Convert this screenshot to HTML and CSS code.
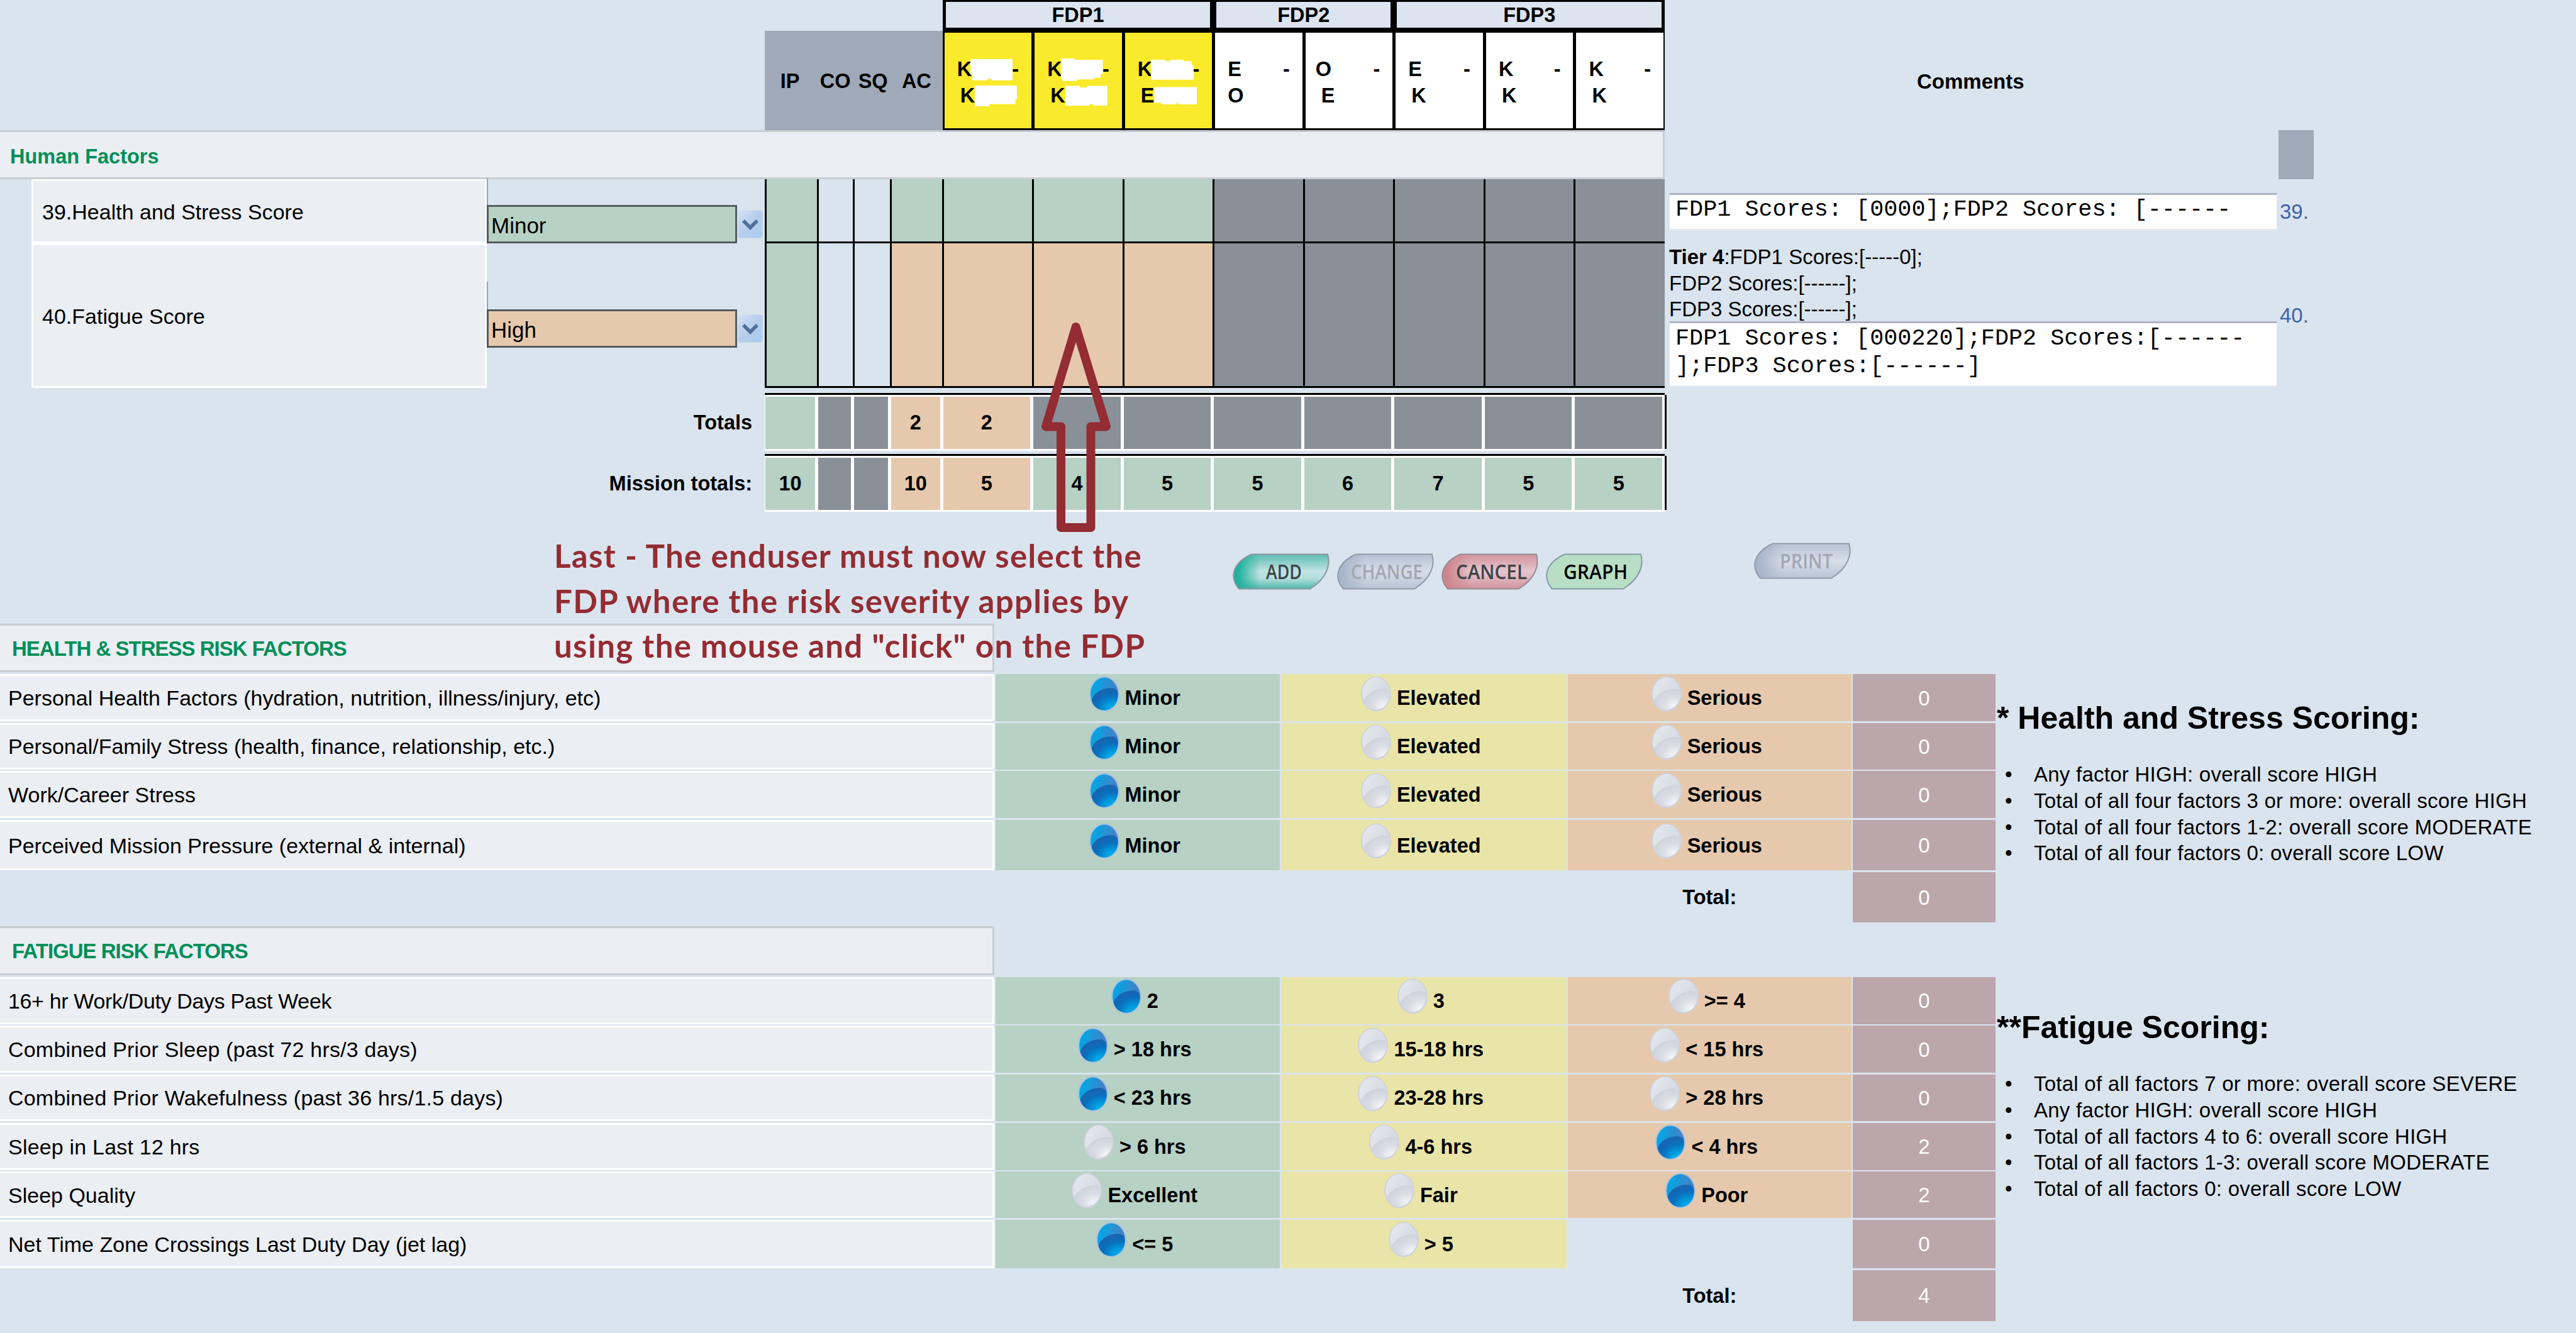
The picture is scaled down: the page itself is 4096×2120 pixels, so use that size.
FILE: index.html
```
<!DOCTYPE html>
<html lang="en">
<head>
<meta charset="utf-8">
<title>Risk Assessment - Human Factors</title>
<link rel="stylesheet" href="styles.css">
</head>
<body>

<!-- shared radio artwork -->
<svg class="defs" width="0" height="0">
    <defs>
        <linearGradient id="blueTop" x1="0" y1="0.2" x2="1" y2="0.4">
            <stop offset="0.2" stop-color="#0aa2e2"/>
            <stop offset="1" stop-color="#4f7cc0"/>
        </linearGradient>
        <radialGradient id="blueBall" cx="0.8" cy="0.95" r="0.95">
            <stop offset="0" stop-color="#00b4f0"/>
            <stop offset="0.3" stop-color="#009ade"/>
            <stop offset="0.65" stop-color="#0a70bc"/>
            <stop offset="1" stop-color="#1a62b0"/>
        </radialGradient>
        <linearGradient id="greyTop" x1="0" y1="0" x2="1" y2="0.6">
            <stop offset="0" stop-color="#e6e9ef"/>
            <stop offset="1" stop-color="#d3d7df"/>
        </linearGradient>
        <radialGradient id="greyBall" cx="0.8" cy="0.85" r="0.9">
            <stop offset="0" stop-color="#f6f7fa"/>
            <stop offset="0.5" stop-color="#dadde4"/>
            <stop offset="1" stop-color="#cdd1da"/>
        </radialGradient>
        <linearGradient id="arrowBtn" x1="0" y1="0" x2="1" y2="1">
            <stop offset="0" stop-color="#d3e1f5"/>
            <stop offset="0.5" stop-color="#b6cdec"/>
            <stop offset="1" stop-color="#a9cdf0"/>
        </linearGradient>
        <symbol id="on" viewBox="0 0 47 56">
            <ellipse cx="23.5" cy="28" rx="23.5" ry="27.5" fill="#a5c3e2"/>
            <ellipse cx="23.5" cy="28" rx="21.5" ry="25.5" fill="url(#blueTop)"/>
            <path d="M3.500 37 C8 26 20 19 34 19 C39 19 42 21 44 24 C47 40 38 53 24 53.500 C12 53.500 5 46 3.500 37Z" fill="url(#blueBall)"/>
        </symbol>
        <symbol id="off" viewBox="0 0 47 56">
            <ellipse cx="23.5" cy="28" rx="23.500" ry="27.500" fill="#ced2dc"/>
            <ellipse cx="23.5" cy="27.500" rx="21.500" ry="25.500" fill="url(#greyTop)"/>
            <path d="M4 38 C9 30 18 22 32 20 C38 19 42 20 44 23 C47 38 38 52 24 52.500 C12 52.500 5 46 4 38Z" fill="url(#greyBall)"/>
        </symbol>
        <symbol id="drop" viewBox="0 0 40 45">
            <rect x="0.500" y="0.500" width="39" height="44" rx="4" fill="url(#arrowBtn)"/>
            <path d="M9 17 L20 28 L31 17" fill="none" stroke="#4d6f98" stroke-width="5.500"/>
        </symbol>
    </defs>
</svg>

<div class="upper">
    <div class="board">
        <div class="head">
            <div class="roles"><span>IP</span><span>CO</span><span>SQ</span><span>AC</span></div>
            <div class="duty">
                <div class="fdp f3">FDP1</div>
                <div class="fdp f2">FDP2</div>
                <div class="fdp f3">FDP3</div>
                <div class="leg yellow">
                    <p>K<i class="mask m1"></i><b>-</b></p>
                    <p class="to">K<i class="mask m2"></i></p>
                </div>
                <div class="leg yellow">
                    <p>K<i class="mask m3"></i><b>-</b></p>
                    <p class="to">K<i class="mask m4"></i></p>
                </div>
                <div class="leg yellow">
                    <p>K<i class="mask m5"></i><b>-</b></p>
                    <p class="to">E<i class="mask m6"></i></p>
                </div>
                <div class="leg"><p>E<b>-</b></p><p>O</p></div>
                <div class="leg"><p class="wide">O<b>-</b></p><p class="to">E</p></div>
                <div class="leg"><p>E<b>-</b></p><p class="to">K</p></div>
                <div class="leg"><p>K<b>-</b></p><p class="to">K</p></div>
                <div class="leg"><p>K<b>-</b></p><p class="to">K</p></div>
            </div>
        </div>

        <div class="band">Human Factors</div>

        <div class="score r39">
            <div class="name">39.Health and Stress Score</div>
            <div class="pick">
                <div class="select green">Minor</div>
                <svg class="drop"><use href="#drop"/></svg>
            </div>
            <div class="cell green first"></div><div class="cell"></div><div class="cell"></div><div class="cell green"></div>
            <div class="cell green"></div><div class="cell green"></div><div class="cell green"></div>
            <div class="cell grey"></div><div class="cell grey"></div><div class="cell grey"></div><div class="cell grey"></div><div class="cell grey"></div>
        </div>
        <div class="score r40">
            <div class="name">40.Fatigue Score</div>
            <div class="pick">
                <div class="select orange">High</div>
                <svg class="drop"><use href="#drop"/></svg>
            </div>
            <div class="cell green first"></div><div class="cell"></div><div class="cell"></div><div class="cell orange"></div>
            <div class="cell orange"></div><div class="cell orange"></div><div class="cell orange"></div>
            <div class="cell grey"></div><div class="cell grey"></div><div class="cell grey"></div><div class="cell grey"></div><div class="cell grey"></div>
        </div>

        <div class="totals">
            <div class="caption">Totals</div>
            <div class="sum">
                <div class="green"></div><div class="grey"></div><div class="grey"></div><div class="orange">2</div>
                <div class="orange">2</div><div class="grey"></div><div class="grey"></div>
                <div class="grey"></div><div class="grey"></div><div class="grey"></div><div class="grey"></div><div class="grey"></div>
            </div>
        </div>
        <div class="totals">
            <div class="caption">Mission totals:</div>
            <div class="sum">
                <div class="green">10</div><div class="grey"></div><div class="grey"></div><div class="orange">10</div>
                <div class="orange">5</div><div class="green">4</div><div class="green">5</div>
                <div class="green">5</div><div class="green">6</div><div class="green">7</div><div class="green">5</div><div class="green">5</div>
            </div>
        </div>

        <div class="buttons">
            <svg class="btn" viewBox="0 0 156 58">
                <defs>
                    <linearGradient id="addV" x1="0" y1="0" x2="0" y2="1">
                        <stop offset="0" stop-color="#5cbcb0"/><stop offset="0.5" stop-color="#c2e3e3"/><stop offset="0.7" stop-color="#b4dedc"/><stop offset="1" stop-color="#4fb7ab"/>
                    </linearGradient>
                    <linearGradient id="addH" x1="0" y1="0" x2="1" y2="0">
                        <stop offset="0.05" stop-color="#1fb09e"/><stop offset="0.28" stop-color="#1fb09e" stop-opacity="0"/>
                    </linearGradient>
                </defs>
                <path d="M31 1.500 H152 C157 18 151 40 124 56.500 H11 C-5 38 1 15 31 1.500Z" fill="url(#addV)"/>
                <path d="M31 1.500 H152 C157 18 151 40 124 56.500 H11 C-5 38 1 15 31 1.500Z" fill="url(#addH)" stroke="#8d979f" stroke-width="2"/>
                <text x="54" y="41" textLength="57" lengthAdjust="spacingAndGlyphs" fill="#3c4446">ADD</text>
            </svg>
            <svg class="btn" viewBox="0 0 156 58">
                <defs>
                    <linearGradient id="offV" x1="0" y1="0" x2="0" y2="1">
                        <stop offset="0" stop-color="#b6c1d3"/><stop offset="0.5" stop-color="#d7dde8"/><stop offset="1" stop-color="#bac4d4"/>
                    </linearGradient>
                    <linearGradient id="offH" x1="0" y1="0" x2="1" y2="0">
                        <stop offset="0.05" stop-color="#a8b5ca"/><stop offset="0.3" stop-color="#a8b5ca" stop-opacity="0"/>
                    </linearGradient>
                </defs>
                <path d="M31 1.500 H152 C157 18 151 40 124 56.500 H11 C-5 38 1 15 31 1.500Z" fill="url(#offV)"/>
                <path d="M31 1.500 H152 C157 18 151 40 124 56.500 H11 C-5 38 1 15 31 1.500Z" fill="url(#offH)" stroke="#919ba8" stroke-width="2"/>
                <text x="23" y="41" textLength="114" lengthAdjust="spacingAndGlyphs" fill="#a0a7b2">CHANGE</text>
            </svg>
            <svg class="btn" viewBox="0 0 156 58">
                <defs>
                    <linearGradient id="canV" x1="0" y1="0" x2="0" y2="1">
                        <stop offset="0" stop-color="#d4939b"/><stop offset="0.5" stop-color="#e5c6d0"/><stop offset="1" stop-color="#d2939c"/>
                    </linearGradient>
                    <linearGradient id="canH" x1="0" y1="0" x2="1" y2="0">
                        <stop offset="0.05" stop-color="#cd858b"/><stop offset="0.3" stop-color="#cd858b" stop-opacity="0"/>
                    </linearGradient>
                </defs>
                <path d="M31 1.500 H152 C157 18 151 40 124 56.500 H11 C-5 38 1 15 31 1.500Z" fill="url(#canV)"/>
                <path d="M31 1.500 H152 C157 18 151 40 124 56.500 H11 C-5 38 1 15 31 1.500Z" fill="url(#canH)" stroke="#938e97" stroke-width="2"/>
                <text x="24" y="41" textLength="113" lengthAdjust="spacingAndGlyphs" fill="#3c4446">CANCEL</text>
            </svg>
            <svg class="btn" viewBox="0 0 156 58">
                <path d="M31 1.500 H152 C157 18 151 40 124 56.500 H11 C-5 38 1 15 31 1.500Z" fill="#b8dfc5" stroke="#8799a8" stroke-width="2"/>
                <text x="29" y="41" textLength="102" lengthAdjust="spacingAndGlyphs" fill="#000">GRAPH</text>
            </svg>
            <svg class="btn print" viewBox="0 0 156 58">
                <path d="M31 1.500 H152 C157 18 151 40 124 56.500 H11 C-5 38 1 15 31 1.500Z" fill="url(#offV)"/>
                <path d="M31 1.500 H152 C157 18 151 40 124 56.500 H11 C-5 38 1 15 31 1.500Z" fill="url(#offH)" stroke="#919ba8" stroke-width="2"/>
                <text x="42" y="41" textLength="84" lengthAdjust="spacingAndGlyphs" fill="#a0a7b2">PRINT</text>
            </svg>
        </div>
    </div>

    <div class="comments">
        <div class="title">Comments</div>
        <div class="box one">FDP1 Scores: [0000];FDP2 Scores: [------</div>
        <div class="tier"><b>Tier 4</b>:FDP1 Scores:[-----0];<br>FDP2 Scores:[------];<br>FDP3 Scores:[------];</div>
        <div class="box two">FDP1 Scores: [000220];FDP2 Scores:[------<br>];FDP3 Scores:[------]</div>
    </div>
    <div class="refs">
        <div class="block"></div>
        <div class="n39">39.</div>
        <div class="n40">40.</div>
    </div>
</div>

<div class="lower">
    <div class="tables">
        <div class="risk health">
            <div class="section">HEALTH &amp; STRESS RISK FACTORS</div>

            <div class="factor">Personal Health Factors (hydration, nutrition, illness/injury, etc)</div>
            <div class="opt green"><svg><use href="#on"/></svg>Minor</div>
            <div class="opt yel"><svg><use href="#off"/></svg>Elevated</div>
            <div class="opt orange"><svg><use href="#off"/></svg>Serious</div>
            <div class="pts">0</div>

            <div class="factor">Personal/Family Stress (health, finance, relationship, etc.)</div>
            <div class="opt green"><svg><use href="#on"/></svg>Minor</div>
            <div class="opt yel"><svg><use href="#off"/></svg>Elevated</div>
            <div class="opt orange"><svg><use href="#off"/></svg>Serious</div>
            <div class="pts">0</div>

            <div class="factor">Work/Career Stress</div>
            <div class="opt green"><svg><use href="#on"/></svg>Minor</div>
            <div class="opt yel"><svg><use href="#off"/></svg>Elevated</div>
            <div class="opt orange"><svg><use href="#off"/></svg>Serious</div>
            <div class="pts">0</div>

            <div class="factor">Perceived Mission Pressure (external &amp; internal)</div>
            <div class="opt green"><svg><use href="#on"/></svg>Minor</div>
            <div class="opt yel"><svg><use href="#off"/></svg>Elevated</div>
            <div class="opt orange"><svg><use href="#off"/></svg>Serious</div>
            <div class="pts">0</div>

            <div class="total">Total:</div>
            <div class="pts">0</div>
        </div>

        <div class="risk fatigue">
            <div class="section">FATIGUE RISK FACTORS</div>

            <div class="factor tight">16+ hr Work/Duty Days Past Week</div>
            <div class="opt green"><svg><use href="#on"/></svg>2</div>
            <div class="opt yel"><svg><use href="#off"/></svg>3</div>
            <div class="opt orange"><svg><use href="#off"/></svg>&gt;= 4</div>
            <div class="pts">0</div>

            <div class="factor loose">Combined Prior Sleep (past 72 hrs/3 days)</div>
            <div class="opt green"><svg><use href="#on"/></svg>&gt; 18 hrs</div>
            <div class="opt yel"><svg><use href="#off"/></svg>15-18 hrs</div>
            <div class="opt orange"><svg><use href="#off"/></svg>&lt; 15 hrs</div>
            <div class="pts">0</div>

            <div class="factor loose">Combined Prior Wakefulness (past 36 hrs/1.5 days)</div>
            <div class="opt green"><svg><use href="#on"/></svg>&lt; 23 hrs</div>
            <div class="opt yel"><svg><use href="#off"/></svg>23-28 hrs</div>
            <div class="opt orange"><svg><use href="#off"/></svg>&gt; 28 hrs</div>
            <div class="pts">0</div>

            <div class="factor loose">Sleep in Last 12 hrs</div>
            <div class="opt green"><svg><use href="#off"/></svg>&gt; 6 hrs</div>
            <div class="opt yel"><svg><use href="#off"/></svg>4-6 hrs</div>
            <div class="opt orange"><svg><use href="#on"/></svg>&lt; 4 hrs</div>
            <div class="pts">2</div>

            <div class="factor">Sleep Quality</div>
            <div class="opt green"><svg><use href="#off"/></svg>Excellent</div>
            <div class="opt yel"><svg><use href="#off"/></svg>Fair</div>
            <div class="opt orange"><svg><use href="#on"/></svg>Poor</div>
            <div class="pts">2</div>

            <div class="factor">Net Time Zone Crossings Last Duty Day (jet lag)</div>
            <div class="opt green"><svg><use href="#on"/></svg>&lt;= 5</div>
            <div class="opt yel"><svg><use href="#off"/></svg>&gt; 5</div>
            <div></div>
            <div class="pts">0</div>

            <div class="total">Total:</div>
            <div class="pts">4</div>
        </div>
    </div>

    <div class="notes">
        <div class="note">
            <h2>* Health and Stress Scoring:</h2>
            <ul>
                <li>Any factor HIGH: overall score HIGH</li>
                <li>Total of all four factors 3 or more: overall score HIGH</li>
                <li>Total of all four factors 1-2: overall score MODERATE</li>
                <li>Total of all four factors 0: overall score LOW</li>
            </ul>
        </div>
        <div class="note">
            <h2>**Fatigue Scoring:</h2>
            <ul>
                <li>Total of all factors 7 or more: overall score SEVERE</li>
                <li>Any factor HIGH: overall score HIGH</li>
                <li>Total of all factors 4 to 6: overall score HIGH</li>
                <li>Total of all factors 1-3: overall score MODERATE</li>
                <li>Total of all factors 0: overall score LOW</li>
            </ul>
        </div>
    </div>
</div>

<!-- callout over the board -->
<svg class="arrow" viewBox="0 0 120 340">
    <path d="M59.700 14 L12 172.400 H36 V333 H83.500 V172.400 H108 Z" fill="none" stroke="#942c33" stroke-width="14" stroke-linejoin="round"/>
</svg>
<div class="callout">Last - The enduser must now select the<br>FDP where the risk severity applies by<br>using the mouse and "click" on the FDP</div>

</body>
</html>
```
FILE: styles.css
```
* { box-sizing: border-box; }
body { margin: 0; position: relative; width: 4096px; height: 2120px; overflow: hidden; background: #dae4ee; color: #000; font-family: "Liberation Sans", Arial, sans-serif; font-size: 33px; }
p, h2, ul { margin: 0; padding: 0; }
.defs { display: block; }

.green { background: #b7d1c4; }
.orange { background: #e6c9ad; }
.grey { background: #899097; }
.yel { background: #e9e5a8; }

/* upper part */
.upper { display: flex; height: 992.4px; }
.board { width: 2647px; font-weight: bold; font-size: 32.5px; }
.head { display: flex; justify-content: flex-end; height: 207px; }
.roles { display: grid; grid-template-columns: 80px 64px 56px 82.5px; align-items: center; text-align: center; width: 282.5px; height: 158px; margin-top: 49px; padding-top: 2px; background: #a0a9b8; }
.duty { display: grid; grid-template-columns: repeat(8, 143.56px); grid-template-rows: 52px 155px; background: #000; }
.fdp { border: 5px solid #000; border-top-width: 3px; border-bottom-width: 8px; background: #dce4ef; text-align: center; line-height: 43px; }
.f3 { grid-column: span 3; }
.f2 { grid-column: span 2; }
.leg { border: solid #000; border-width: 0 2px 3px 3px; background: #fff; padding-top: 38px; line-height: 41.600px; }
.leg p { display: flex; align-items: center; height: 41.600px; padding: 0 20px 0 20px; }
.leg p b { margin-left: auto; }
.leg .to { padding-left: 25px; }
.leg .wide { padding-left: 16px; }
.leg.yellow { background: #f9ea2b; }
.mask { width: 67px; height: 32px; margin-right: -20px; background: #fff; }
.m1 { height: 34px; margin-left: -2px; clip-path: polygon(0 0, 100% 0, 100% 100%, 50% 100%, 50% 93%, 40% 93%, 40% 100%, 4% 100%, 4% 70%, 0 70%); }
.m2 { height: 33px; clip-path: polygon(0 0, 100% 0, 100% 66%, 96% 66%, 96% 90%, 34% 90%, 34% 100%, 0 100%); }
.m3 { height: 36px; margin-left: -2px; clip-path: polygon(0 0, 33% 0, 33% 7%, 100% 7%, 100% 68%, 95% 68%, 95% 85%, 80% 85%, 80% 93%, 38% 93%, 38% 100%, 4% 100%, 4% 90%, 0 90%); }
.m4 { clip-path: polygon(0 0, 35% 0, 35% 8%, 52% 8%, 52% 0, 100% 0, 100% 100%, 66% 100%, 66% 92%, 57% 92%, 57% 100%, 0 100%); }
.m5 { width: 68px; margin-left: -2px; clip-path: polygon(0 0, 33% 0, 33% 8%, 45% 8%, 45% 0, 76% 0, 76% 8%, 95% 8%, 95% 28%, 100% 28%, 100% 100%, 0 100%); }
.m6 { width: 68px; height: 28px; clip-path: polygon(0 0, 100% 0, 100% 100%, 56% 100%, 56% 90%, 52% 90%, 52% 100%, 18% 100%, 18% 90%, 0 90%); }

.band { height: 78px; padding: 4px 0 0 16px; border: 3px solid #c8cdd4; border-left: 0; background: #ebeef3; color: #008f58; line-height: 70px; }

.score { display: grid; grid-template-columns: 724px 442px 84px 57px 59px 82.5px repeat(8, 143.56px); margin-left: 50px; }
.r39 { height: 102px; }
.r40 { height: 230px; }
.name { display: flex; align-items: center; padding: 2px 0 0 14px; border: 3px solid #fff; background: #ebeef3; font-weight: normal; font-size: 34px; }
.pick { position: relative; display: flex; align-items: flex-start; padding-top: 41px; border-left: 2px solid transparent; }
.pick::before { content: ""; position: absolute; left: -2px; top: -2px; width: 2px; height: 43px; background: #88a6cb; }
.r40 .pick { padding-top: 105px; }
.r40 .pick::before { top: 61px; height: 44px; }
.select { width: 398px; height: 61px; margin-left: -2px; padding-left: 4px; border: 3px solid #535c5d; font-weight: normal; font-size: 35px; line-height: 59px; }
.drop { width: 40px; height: 45px; margin: 8px 0 0 1px; }
.cell { border-left: 3px solid #000; border-bottom: 3px solid #000; margin-left: -1px; }
.cell.first { margin-left: 0; }

.totals { display: flex; justify-content: flex-end; margin-top: 8px; height: 89px; }
.caption { padding: 5px 20px 0 0; line-height: 84px; }
.sum { position: relative; display: grid; grid-template-columns: 84px 57px 59px 82.5px repeat(8, 143.56px); border-top: 3px solid #000; }
.sum::after { content: ""; position: absolute; right: -3px; top: 0; bottom: 0; width: 3px; background: #000; }
.sum div { border: 3px solid #fff; border-right-width: 4px; border-left-width: 1px; text-align: center; line-height: 83px; }

.buttons { display: flex; gap: 10px; width: 1100px; margin: 69px 0 0 1959px; }
.btn { width: 156px; height: 58px; overflow: visible; font-family: "Open Sans", sans-serif; font-size: 33px; font-weight: 600; }
.print { margin: -17px 0 0 165px; }

.comments { width: 976px; padding-left: 7px; font-size: 33px; }
.title { height: 307px; padding-top: 111px; padding-left: 394px; font-weight: bold; }
.box { width: 965px; margin-left: 1px; padding: 1px 9px; border-top: 3px solid #aab4c3; border-bottom: 3px solid #e3e9f1; background: #fff; font-family: "Liberation Mono", "Courier New", monospace; font-size: 36.800px; line-height: 44.200px; white-space: pre; }
.one { height: 60px; }
.two { height: 105px; padding-top: 2px; }
.tier { height: 144px; padding-top: 21px; line-height: 41.600px; }
.refs { width: 60px; padding-top: 207px; color: #3f62a6; }
.block { width: 56px; height: 78px; background: #a0a9b8; }
.n39 { height: 165px; padding-left: 2px; line-height: 104px; }
.n40 { padding-left: 2px; line-height: 104px; }

/* risk tables */
.lower { display: flex; }
.tables { width: 3173px; }
.risk { display: grid; grid-template-columns: 1580.5px 451.5px 453.5px 450.5px 227px; gap: 2.700px 2.500px; }
.health { grid-template-rows: 77px 75px 74px 75px 80px 80px; margin-bottom: 6px; }
.fatigue { grid-template-rows: 78px 75px 75px 74px 75px 74px 77px 81px; }
.section { grid-column: 1 / -1; width: 1580.5px; padding-left: 19px; border: 3px solid #c8cdd4; border-left: 0; background: #ebeef3; color: #008f58; font-weight: bold; line-height: 73px; letter-spacing: -1px; }
.factor { display: flex; align-items: center; padding: 2px 0 0 13px; border: 3px solid #fff; border-left: 0; background: #ebeef3; font-size: 34px; }
.tight { letter-spacing: -0.350px; }
.loose { letter-spacing: 0.200px; }
.opt { display: flex; align-items: center; justify-content: center; gap: 9px; padding: 2px 9px 0 0; font-weight: bold; font-size: 32.5px; }
.opt svg { width: 48px; height: 57px; margin-bottom: 15px; }
.pts { display: flex; align-items: center; justify-content: center; padding-top: 2px; background: #bba6ab; color: #fff; }
.total { grid-column: 4; display: flex; align-items: center; justify-content: center; padding-top: 2px; font-weight: bold; font-size: 32.5px; }

.notes { padding: 122px 0 0 2px; }
.note { height: 492px; }
.note h2 { height: 97px; font-size: 50px; line-height: 56px; white-space: nowrap; }
.note ul { padding-left: 59px; list-style: none; }
.note li { position: relative; font-size: 33px; line-height: 41.600px; letter-spacing: 0.250px; white-space: nowrap; }
.note li::before { content: "•"; position: absolute; left: -46px; }

/* callout */
.arrow { position: absolute; left: 1651px; top: 506px; width: 120px; height: 340px; }
.callout { position: absolute; left: 881px; top: 848px; color: #942c33; font-family: Lato, sans-serif; font-weight: bold; font-size: 51px; line-height: 71.600px; letter-spacing: 1.350px; white-space: nowrap; }
```
